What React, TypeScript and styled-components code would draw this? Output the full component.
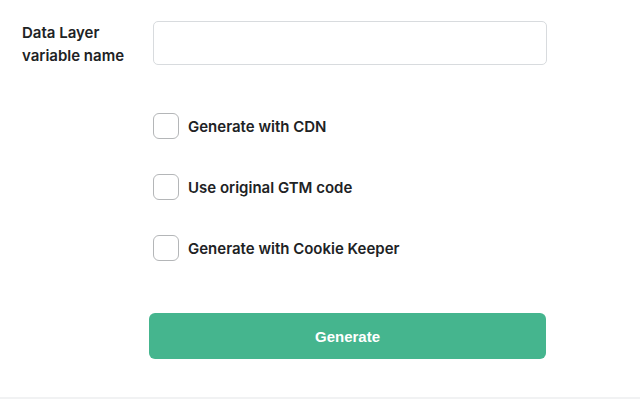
import React, { useState } from 'react';
import styled, { createGlobalStyle } from 'styled-components';

const GlobalStyle = createGlobalStyle`
  html, body {
    margin: 0;
    padding: 0;
    background: #ffffff;
  }
  body {
    font-family: Inter, "Noto Sans", sans-serif;
    color: #222426;
  }
`;

const Page = styled.div`
  width: 640px;
  height: 399px;
  box-sizing: border-box;
  border-bottom: 2px solid #f1f2f3;
  padding: 21px 0 0 22px;
`;

const FieldRow = styled.div`
  display: grid;
  grid-template-columns: 131px 394px;
  align-items: start;
  height: 44px;
`;

const Label = styled.label`
  font-size: 15px;
  font-weight: 600;
  line-height: 23px;
  color: #202224;
`;

const TextInput = styled.input`
  box-sizing: border-box;
  width: 394px;
  height: 44px;
  border: 1px solid #d8dbde;
  border-radius: 5px;
  padding: 0 12px;
  font-family: inherit;
  font-size: 15px;
  outline: none;
`;

const Options = styled.div`
  display: flex;
  flex-direction: column;
  gap: 35px;
  margin: 48px 0 0 131px;
`;

const OptionRow = styled.label`
  display: flex;
  align-items: center;
  gap: 9px;
  cursor: pointer;
`;

const Box = styled.span<{ checked?: boolean }>`
  box-sizing: border-box;
  width: 26px;
  height: 26px;
  border: 1px solid #b4b6b8;
  border-radius: 6px;
  background: ${({ checked }) => (checked ? '#45b58e' : '#ffffff')};
`;

const OptionText = styled.span`
  font-size: 15px;
  font-weight: 600;
  color: #202224;
`;

const Button = styled.button`
  display: block;
  box-sizing: border-box;
  width: 397px;
  height: 46px;
  margin: 52px 0 0 127px;
  border: none;
  border-radius: 6px;
  background: #45b58e;
  color: #ffffff;
  font-family: "Liberation Sans", Arial, sans-serif;
  font-size: 15px;
  font-weight: 700;
  cursor: pointer;
`;

const options = ['Generate with CDN', 'Use original GTM code', 'Generate with Cookie Keeper'];

export default function App() {
  const [checked, setChecked] = useState<boolean[]>([false, false, false]);

  return (
    <>
      <GlobalStyle />
      <Page>
        <FieldRow>
          <Label>
            Data Layer
            <br />
            variable name
          </Label>
          <TextInput />
        </FieldRow>
        <Options>
          {options.map((text, i) => (
            <OptionRow
              key={text}
              onClick={() => setChecked(c => c.map((v, j) => (j === i ? !v : v)))}
            >
              <Box checked={checked[i]} />
              <OptionText>{text}</OptionText>
            </OptionRow>
          ))}
        </Options>
        <Button>Generate</Button>
      </Page>
    </>
  );
}
